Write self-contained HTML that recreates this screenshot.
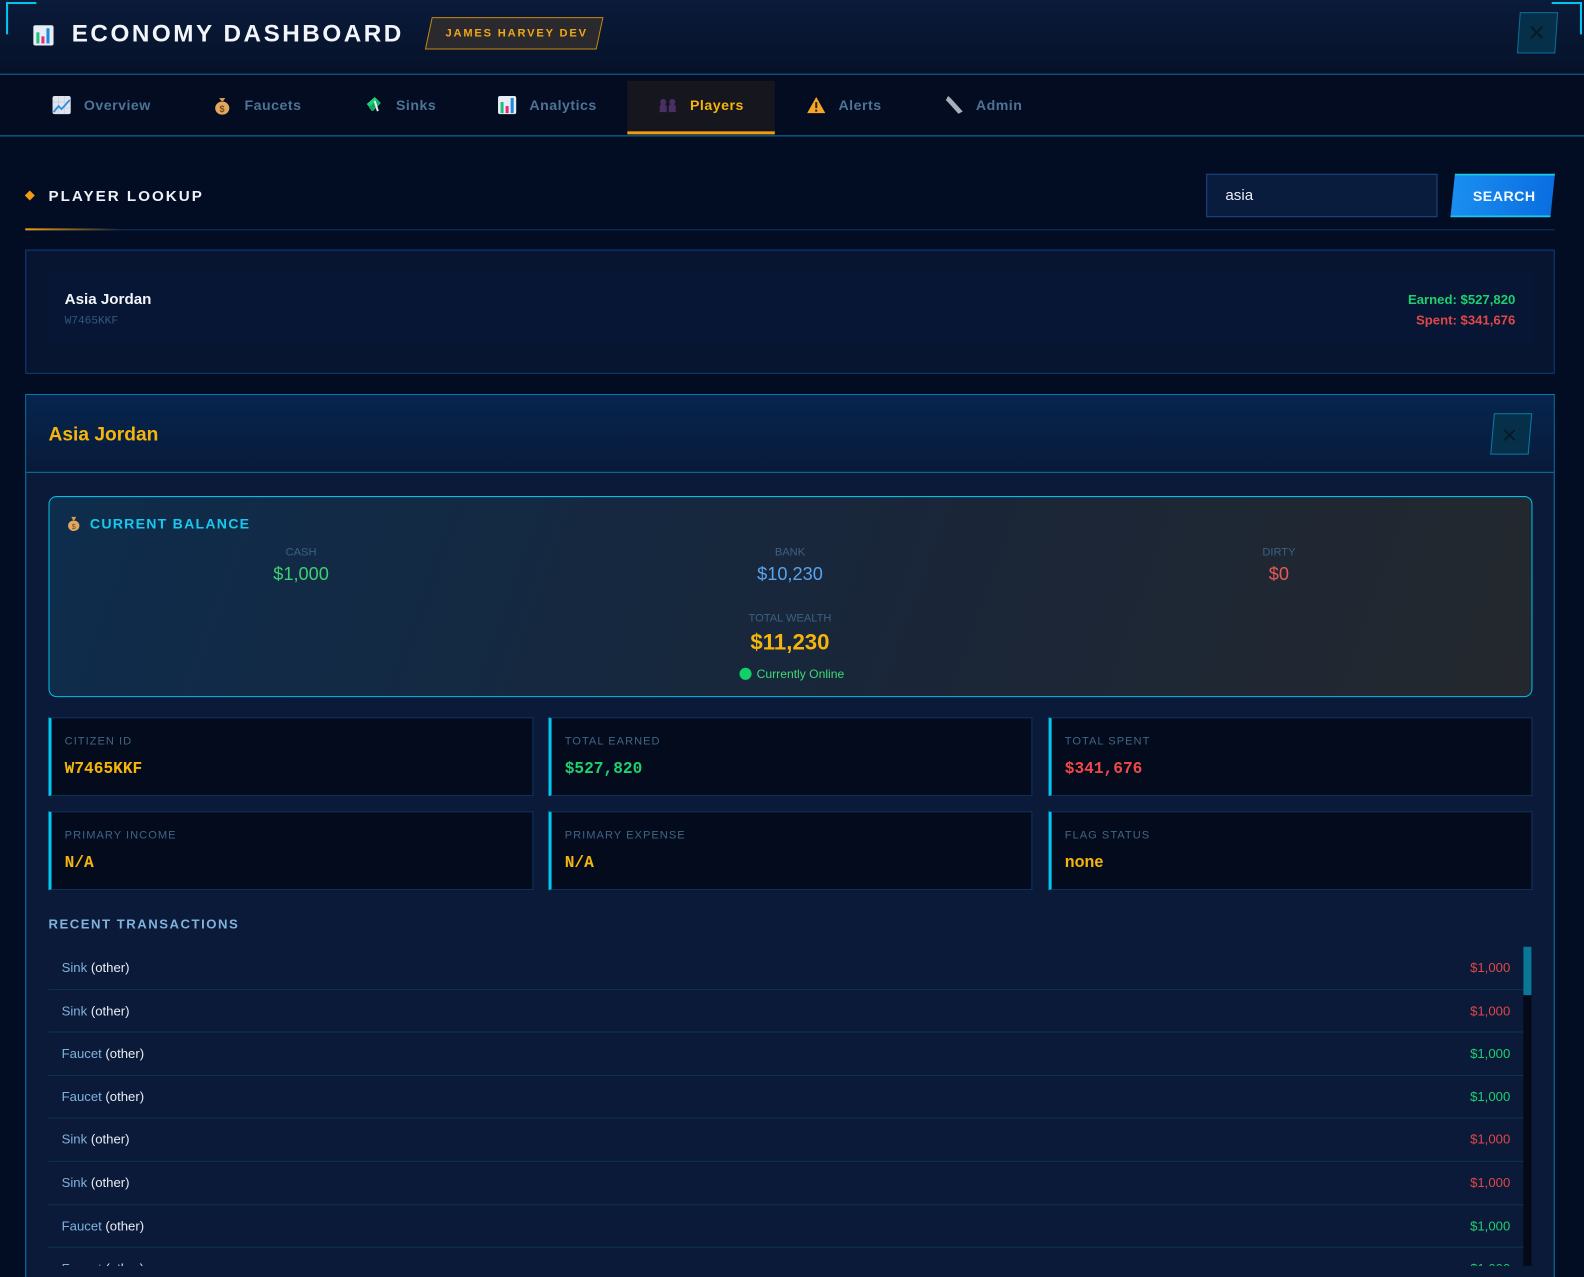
<!DOCTYPE html>
<html style="width:1584px;height:1277px;overflow:hidden"><head><meta charset="utf-8"><style>
*{box-sizing:border-box;margin:0;padding:0}
body{width:1584px;height:1277px;overflow:hidden;background:#020c22;font-family:"Liberation Sans","DejaVu Sans",sans-serif;position:relative;color:#fff}
#w{position:absolute;left:0;top:0;width:1568px;height:1264px;overflow:hidden;transform:scale(1.0102,1.0103);transform-origin:0 0}
.a{position:absolute}
.hdr{left:0;top:0;width:1568px;height:74px;background:linear-gradient(180deg,#0a1a3a,#061229);border-bottom:1px solid #0a7fa8}
.nav{left:0;top:74px;width:1568px;height:61px;background:#030c20;border-bottom:1px solid #0a7fa8}
.tab{top:0;height:60px;display:flex;align-items:center;font-size:14px;font-weight:bold;color:#4d7398;letter-spacing:.5px}
.tab svg{margin-right:12px}
.mono{font-family:"Liberation Mono","DejaVu Sans Mono",monospace}
.card{background:#040b1c;border:1px solid #0e3564;border-left:3px solid #00c8f0}
.card .l{position:absolute;left:13px;top:17px;font-size:11px;letter-spacing:1px;color:#3f6588}
.card .v{position:absolute;left:13px;top:41px;font-size:16px;font-weight:bold}
.row{left:48px;width:1460px;height:42.6px;border-bottom:1px solid #0f3350;font-size:13px}
.row .n{position:absolute;left:13px;top:13px;color:#7fb2dc}
.row .n b{color:#e8eef5;font-weight:normal}
.row .m{position:absolute;right:13px;top:13px}
</style></head><body><div id="w">
<div class="a hdr"></div>
<div class="a" style="left:6px;top:2px;width:30px;height:32px;border-left:2px solid #00c8f0;border-top:2px solid #00c8f0"></div>
<div class="a" style="right:2px;top:2px;width:30px;height:32px;border-right:2px solid #00c8f0;border-top:2px solid #00c8f0"></div>
<svg class="a" style="left:32px;top:24px" width="22" height="22" viewBox="0 0 22 22"><rect x="1" y="1" width="20" height="20" rx="2" fill="#e8ecf4"/><rect x="4" y="8" width="3" height="11" fill="#1ec07a"/><rect x="9" y="12" width="3" height="7" fill="#e8297a"/><rect x="14" y="4" width="3" height="15" fill="#1b8be0"/></svg>
<div class="a" style="left:71px;top:20px;font-size:24px;font-weight:bold;letter-spacing:2.5px;color:#f2f5fa">ECONOMY DASHBOARD</div>
<div class="a" style="left:424px;top:17px;width:170px;height:32px;background:#2a2a2e;border:1px solid #c8860e;transform:skewX(-12deg)"></div>
<div class="a" style="left:441px;top:27px;font-size:11px;font-weight:bold;letter-spacing:1.8px;color:#f0a818">JAMES HARVEY DEV</div>
<div class="a" style="left:1503px;top:12px;width:38px;height:41px;background:#06304a;border:1px solid #0a6f94;transform:skewX(-4deg)"></div>
<div class="a" style="left:1512px;top:20px;font-size:22px;color:#071a28">✕</div>

<div class="a nav">
<div class="a" style="left:621px;top:6px;width:146px;height:53px;background:#16161e;border-bottom:3px solid #f39c12"></div>
<div class="a tab" style="left:51px"><svg width="20" height="20" viewBox="0 0 20 20"><rect x="1" y="1" width="18" height="18" rx="2" fill="#dfe4ee"/><path d="M1 7h18M1 13h18M7 1v18M13 1v18" stroke="#c4cad8" stroke-width=".6"/><path d="M2 17l5-6 3 3 8-9" stroke="#2f8fe0" stroke-width="1.8" fill="none"/></svg>Overview</div>
<div class="a tab" style="left:210px"><svg width="20" height="20" viewBox="0 0 20 20"><path d="M7 3h6l-2 3h-2z" fill="#d59a52"/><ellipse cx="10" cy="13" rx="7" ry="6.5" fill="#e0a862"/><text x="10" y="17" font-size="9" text-anchor="middle" fill="#7a4a14">$</text></svg>Faucets</div>
<div class="a tab" style="left:360px"><svg width="20" height="20" viewBox="0 0 20 20"><path d="M3 9l8-7 6 6-8 8z" fill="#1ed07a"/><path d="M5 12l8-7 3 3-8 8z" fill="#12a860"/><path d="M11 6l3 10" stroke="#eee" stroke-width="2"/></svg>Sinks</div>
<div class="a tab" style="left:492px"><svg width="20" height="20" viewBox="0 0 20 20"><rect x="1" y="1" width="18" height="18" rx="2" fill="#e8ecf4"/><rect x="3.5" y="7" width="3" height="11" fill="#1ec07a"/><rect x="8.5" y="11" width="3" height="7" fill="#e8297a"/><rect x="13.5" y="3" width="3" height="15" fill="#1b8be0"/></svg>Analytics</div>
<div class="a tab" style="left:651px;color:#f5b50c"><svg width="20" height="20" viewBox="0 0 20 20"><path d="M2 17v-6a4 4 0 0 1 7 0v6zM11 17v-6a4 4 0 0 1 7 0v6z" fill="#4a2f66"/><circle cx="5.5" cy="7" r="3" fill="#4a2f66"/><circle cx="14.5" cy="7" r="3" fill="#4a2f66"/></svg>Players</div>
<div class="a tab" style="left:798px"><svg width="20" height="20" viewBox="0 0 20 20"><path d="M10 2l9 16H1z" fill="#f5a623"/><rect x="9" y="7" width="2" height="6" fill="#222"/><rect x="9" y="14.5" width="2" height="2" fill="#222"/></svg>Alerts</div>
<div class="a tab" style="left:934px"><svg width="20" height="20" viewBox="0 0 20 20"><path d="M4 2l3 3-1 2 9 10 2-1-9-10-2 1-3-3" stroke="#a8b0bc" stroke-width="2.5" fill="none"/></svg>Admin</div>
</div>

<div class="a" style="left:26px;top:190px;width:7px;height:7px;background:#f39c12;transform:rotate(45deg)"></div>
<div class="a" style="left:48px;top:186px;font-size:15px;font-weight:bold;letter-spacing:2px;color:#eef2f8">PLAYER LOOKUP</div>
<div class="a" style="left:25px;top:227px;width:1514px;height:1px;background:#0e3564"></div>
<div class="a" style="left:25px;top:226px;width:95px;height:2px;background:linear-gradient(90deg,#f39c12,rgba(243,156,18,0))"></div>
<div class="a" style="left:1194px;top:172px;width:229px;height:43px;background:#0a1c3e;border:1px solid #1a4a8a"></div>
<div class="a" style="left:1213px;top:185px;font-size:15px;color:#e8eef6">asia</div>
<div class="a" style="left:1438px;top:172px;width:99px;height:43px;background:linear-gradient(90deg,#1a8ef0,#0a6ee0);border-top:2px solid #18c8f5;border-bottom:2px solid #18c8f5;transform:skewX(-6deg)"></div>
<div class="a" style="left:1458px;top:186px;font-size:14px;font-weight:bold;letter-spacing:.5px;color:#f2f8ff">SEARCH</div>

<div class="a" style="left:25px;top:247px;width:1514px;height:123px;background:#071530;border:1px solid #113e78"></div>
<div class="a" style="left:46px;top:268px;width:1472px;height:74px;background:#061634"></div>
<div class="a" style="left:64px;top:288px;font-size:15px;font-weight:bold;color:#f2f5fa">Asia Jordan</div>
<div class="a mono" style="left:64px;top:312px;font-size:11px;color:#345a80">W7465KKF</div>
<div class="a" style="right:68px;top:289px;font-size:13px;font-weight:bold;color:#1ed070">Earned: $527,820</div>
<div class="a" style="right:68px;top:309px;font-size:13px;font-weight:bold;color:#e04848">Spent: $341,676</div>

<div class="a" style="left:25px;top:390px;width:1514px;height:874px;background:#0a1a38;border:1px solid #0a7aa8;border-bottom:none"></div>
<div class="a" style="left:26px;top:391px;width:1512px;height:77px;background:linear-gradient(180deg,#06254e,#081a3a);border-bottom:1px solid #0a7aa8"></div>
<div class="a" style="left:48px;top:420px;font-size:19px;font-weight:bold;color:#f5b50c">Asia Jordan</div>
<div class="a" style="left:1477px;top:409px;width:38px;height:41px;background:#06304a;border:1px solid #0a7aa8;transform:skewX(-5deg)"></div>
<div class="a" style="left:1486px;top:419px;font-size:20px;color:#071a28">✕</div>

<div class="a" style="left:48px;top:491px;width:1469px;height:199px;border:1.5px solid #00c0e8;border-radius:8px;background:linear-gradient(110deg,#0e2c4c,#1a2638 60%,#24282e)"></div>
<svg class="a" style="left:65px;top:510px" width="16" height="16" viewBox="0 0 20 20"><path d="M7 2h6l-2 4h-2z" fill="#d59a52"/><ellipse cx="10" cy="13" rx="7" ry="6.5" fill="#e0a862"/><text x="10" y="17" font-size="9" text-anchor="middle" fill="#7a4a14">$</text></svg>
<div class="a" style="left:89px;top:510px;font-size:14px;font-weight:bold;letter-spacing:1.2px;color:#18c8f0">CURRENT BALANCE</div>
<div class="a" style="left:198px;width:200px;top:541px;text-align:center;font-size:11px;color:#3e6080">CASH</div>
<div class="a" style="left:198px;width:200px;top:558px;text-align:center;font-size:18px;color:#3cd070">$1,000</div>
<div class="a" style="left:682px;width:200px;top:541px;text-align:center;font-size:11px;color:#3e6080">BANK</div>
<div class="a" style="left:682px;width:200px;top:558px;text-align:center;font-size:18px;color:#5aa4ec">$10,230</div>
<div class="a" style="left:1166px;width:200px;top:541px;text-align:center;font-size:11px;color:#3e6080">DIRTY</div>
<div class="a" style="left:1166px;width:200px;top:558px;text-align:center;font-size:18px;color:#e85858">$0</div>
<div class="a" style="left:682px;width:200px;top:606px;text-align:center;font-size:11px;color:#3e6080">TOTAL WEALTH</div>
<div class="a" style="left:682px;width:200px;top:623px;text-align:center;font-size:22px;font-weight:bold;color:#f5b50c">$11,230</div>
<div class="a" style="left:732px;top:661px;width:12px;height:12px;border-radius:50%;background:#12d068"></div>
<div class="a" style="left:749px;top:660px;font-size:12px;color:#3cd878">Currently Online</div>

<div class="a card" style="left:48px;top:710px;width:480px;height:78px"><div class="l">CITIZEN ID</div><div class="v mono" style="color:#f5b50c">W7465KKF</div></div>
<div class="a card" style="left:543px;top:710px;width:479px;height:78px"><div class="l">TOTAL EARNED</div><div class="v mono" style="color:#1ed070">$527,820</div></div>
<div class="a card" style="left:1038px;top:710px;width:479px;height:78px"><div class="l">TOTAL SPENT</div><div class="v mono" style="color:#f04848">$341,676</div></div>
<div class="a card" style="left:48px;top:803px;width:480px;height:78px"><div class="l">PRIMARY INCOME</div><div class="v mono" style="color:#f5b50c">N/A</div></div>
<div class="a card" style="left:543px;top:803px;width:479px;height:78px"><div class="l">PRIMARY EXPENSE</div><div class="v mono" style="color:#f5b50c">N/A</div></div>
<div class="a card" style="left:1038px;top:803px;width:479px;height:78px"><div class="l">FLAG STATUS</div><div class="v" style="color:#f5b50c">none</div></div>

<div class="a" style="left:48px;top:907px;font-size:13px;font-weight:bold;letter-spacing:1.5px;color:#7fb2dc">RECENT TRANSACTIONS</div>
<div class="a" style="left:48px;top:937px;width:1468px;height:316px;overflow:hidden">
<div class="a row" style="left:0;top:0"><span class="n">Sink <b>(other)</b></span><span class="m" style="color:#e04848">$1,000</span></div>
<div class="a row" style="left:0;top:42.6px"><span class="n">Sink <b>(other)</b></span><span class="m" style="color:#e04848">$1,000</span></div>
<div class="a row" style="left:0;top:85.2px"><span class="n">Faucet <b>(other)</b></span><span class="m" style="color:#1ed070">$1,000</span></div>
<div class="a row" style="left:0;top:127.8px"><span class="n">Faucet <b>(other)</b></span><span class="m" style="color:#1ed070">$1,000</span></div>
<div class="a row" style="left:0;top:170.4px"><span class="n">Sink <b>(other)</b></span><span class="m" style="color:#e04848">$1,000</span></div>
<div class="a row" style="left:0;top:213px"><span class="n">Sink <b>(other)</b></span><span class="m" style="color:#e04848">$1,000</span></div>
<div class="a row" style="left:0;top:255.6px"><span class="n">Faucet <b>(other)</b></span><span class="m" style="color:#1ed070">$1,000</span></div>
<div class="a row" style="left:0;top:298.2px"><span class="n">Faucet <b>(other)</b></span><span class="m" style="color:#1ed070">$1,000</span></div>
<div class="a" style="left:1460px;top:0;width:8px;height:316px;background:#040a18"></div>
<div class="a" style="left:1460px;top:0;width:8px;height:48px;background:#087896"></div>
</div>
</div></body></html>
